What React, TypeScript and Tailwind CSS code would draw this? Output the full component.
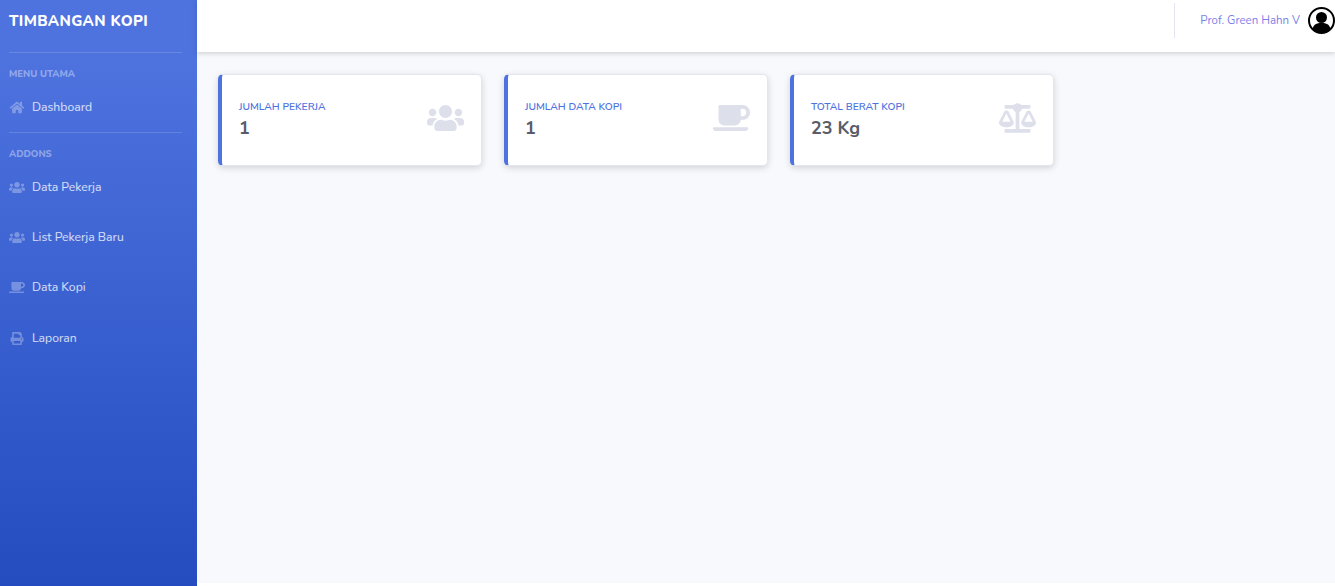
import type { ReactNode } from "react";
import { FaBalanceScale, FaCoffee, FaHome, FaPrint, FaUsers } from "react-icons/fa";

const navIcon = "h-[13px] w-[16px] shrink-0";
const cardIcon = "h-[30px] w-[37px]";

function NavItem({ icon, label, className }: { icon: ReactNode; label: string; className: string }) {
  return (
    <a className={`flex items-center gap-[7px] text-[12.2px] leading-[20px] text-white/80 ${className}`}>
      <span className="text-white/30">{icon}</span>
      {label}
    </a>
  );
}

function StatCard({ title, value, icon }: { title: string; value: string; icon: ReactNode }) {
  return (
    <div className="flex h-[91.5px] w-[263.5px] items-center justify-between rounded-[5px] border border-l-4 border-[#e3e6f0] border-l-[#4e73df] bg-white pl-[17px] pr-[16.500px] shadow-[0_2px_6px_rgba(58,59,69,0.2)]">
      <div>
        <div className="text-[10.25px] leading-[14px] font-semibold text-[#4e73df]">{title}</div>
        <div className="mt-[2px] text-[18px] leading-[24px] font-bold text-[#5a5c69]">{value}</div>
      </div>
      <div className="mb-[3px] text-[#dddfeb]">{icon}</div>
    </div>
  );
}

function Avatar() {
  return (
    <svg viewBox="0 0 27 27" className="h-[27px] w-[27px]">
      <circle cx="13.5" cy="13.5" r="12.5" fill="white" stroke="black" strokeWidth="2" />
      <circle cx="13.5" cy="10.5" r="5.5" fill="black" />
      <path d="M4.5 22c1-4.500 4-6 9-6s8 1.500 9 6a12.500 12.500 0 0 1-18 0z" fill="black" />
    </svg>
  );
}

export default function App() {
  return (
    <div className="flex h-[586px] overflow-hidden bg-white font-['Nunito','Lato','Open_Sans',sans-serif]">
      <aside className="flex w-[197px] shrink-0 flex-col bg-[linear-gradient(180deg,#4e73df_10%,#224abe_105%)] pl-[9px] pr-[15px]">
        <div className="pt-[11px] text-[15px] leading-[20px] font-extrabold tracking-[0.35px] whitespace-nowrap text-white">TIMBANGAN KOPI</div>
        <div className="mt-[21px] border-t border-white/15" />
        <div className="mt-[15px] text-[9.5px] leading-[12px] font-extrabold text-white/40">MENU UTAMA</div>
        <NavItem icon={<FaHome className={navIcon} />} label="Dashboard" className="mt-[17px]" />
        <div className="mt-[15px] border-t border-white/15" />
        <div className="mt-[15px] text-[9.5px] leading-[12px] font-extrabold text-white/40">ADDONS</div>
        <NavItem icon={<FaUsers className={navIcon} />} label="Data Pekerja" className="mt-[17px]" />
        <NavItem icon={<FaUsers className={navIcon} />} label="List Pekerja Baru" className="mt-[30px]" />
        <NavItem icon={<FaCoffee className={navIcon} />} label="Data Kopi" className="mt-[30px]" />
        <NavItem icon={<FaPrint className={navIcon} />} label="Laporan" className="mt-[31px]" />
      </aside>
      <div className="flex min-w-0 flex-1 flex-col">
        <div className="h-[583px] bg-[#f8f9fc]">
          <header className="flex h-[52px] items-center justify-end bg-white pb-[12px] shadow-[0_1px_5px_rgba(58,59,69,0.25)]">
            <div className="mr-[25px] h-[35px] border-l border-[#e3e6f0]" />
            <span className="mt-[2px] text-[11.5px] text-[#7b7fe8]">Prof. Green Hahn V</span>
            <div className="ml-[8px] flex"><Avatar /></div>
          </header>
          <main className="flex gap-[22.5px] pl-[21px] pt-[22px]">
            <StatCard title="JUMLAH PEKERJA" value="1" icon={<FaUsers className={cardIcon} />} />
            <StatCard title="JUMLAH DATA KOPI" value="1" icon={<FaCoffee className={cardIcon} />} />
            <StatCard title="TOTAL BERAT KOPI" value="23 Kg" icon={<FaBalanceScale className={cardIcon} />} />
          </main>
        </div>
      </div>
    </div>
  );
}
